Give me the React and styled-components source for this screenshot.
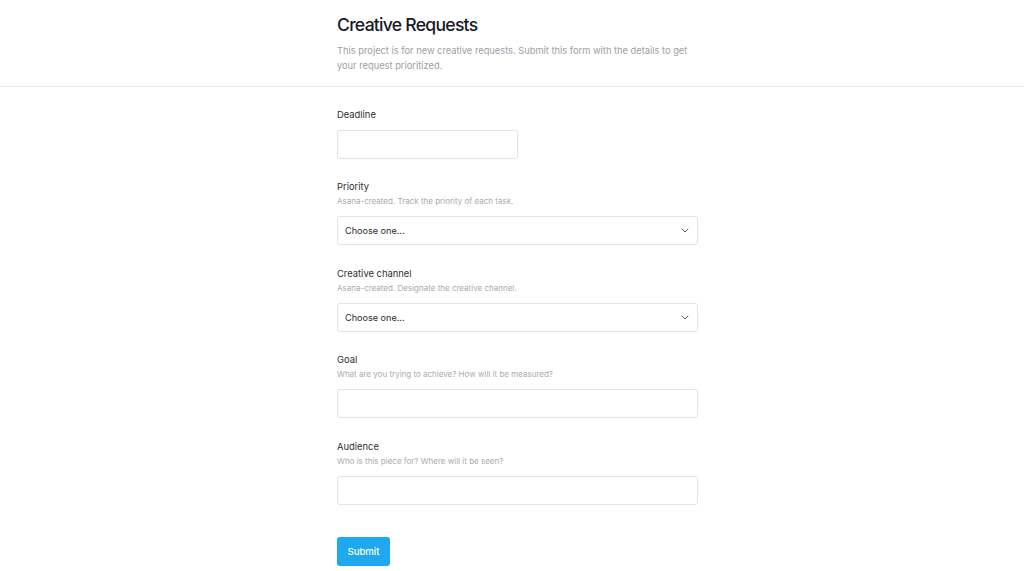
import React from "react";
import styled, { createGlobalStyle } from "styled-components";

const GlobalStyle = createGlobalStyle`
  html, body {
    margin: 0;
    padding: 0;
    background: #ffffff;
    font-family: Inter, "Noto Sans", "Liberation Sans", sans-serif;
    color: #1e1f21;
  }
  * { box-sizing: border-box; }
`;

const Header = styled.header`
  border-bottom: 1px solid #e6e6e6;
  padding: 14px 0 13px;
`;

const Column = styled.div`
  width: 361px;
  margin-left: calc(50% - 175px);
`;

const Title = styled.h1`
  margin: 0;
  font-size: 17.6px;
  line-height: 22px;
  font-weight: 500;
  color: #151b26;
  letter-spacing: -0.75px;
`;

const Desc = styled.p`
  margin: 7px 0 0;
  font-size: 9.3px;
  line-height: 15px;
  color: #9ca0a6;
  width: 361px;
`;

const Form = styled.form`
  padding-top: 21px;
  display: flex;
  flex-direction: column;
`;

const Field = styled.div`
  display: flex;
  flex-direction: column;
  margin-bottom: ${(p) => (p.$first ? "21px" : "21.5px")};
`;

const Label = styled.label`
  font-size: 9.4px;
  line-height: 14px;
  color: #2e2f31;
  margin-bottom: ${(p) => (p.$hasHelp ? "1px" : "8px")};
`;

const Help = styled.div`
  font-size: 8px;
  line-height: 12px;
  color: #a8abb0;
  margin-bottom: 9px;
`;

const Input = styled.div`
  width: ${(p) => (p.$short ? "181px" : "361px")};
  height: 29px;
  border: 1px solid #e2e3e5;
  border-radius: 3px;
  background: #fff;
`;

const Select = styled.div`
  width: 361px;
  height: 29px;
  border: 1px solid #e2e3e5;
  border-radius: 3px;
  background: #fff;
  display: flex;
  align-items: center;
  justify-content: space-between;
  padding: 0 8px 0 7px;
  font-size: 9.1px;
  color: #2a2b2d;
`;

const Chevron = () => (
  <svg width="8" height="5" viewBox="0 0 8 5" fill="none">
    <path d="M1 1l3 3 3-3" stroke="#5a5d62" strokeWidth="1" strokeLinecap="round" strokeLinejoin="round" />
  </svg>
);

const Submit = styled.button`
  margin-top: 11px;
  width: 53px;
  height: 29px;
  border: none;
  border-radius: 3px;
  background: #1ea8f0;
  color: #fff;
  font-family: inherit;
  font-size: 9.6px;
  font-weight: 500;
  padding: 0;
  cursor: pointer;
`;

const fields = [
  { label: "Priority", help: "Asana-created. Track the priority of each task.", select: true },
  { label: "Creative channel", help: "Asana-created. Designate the creative channel.", select: true },
  { label: "Goal", help: "What are you trying to achieve? How will it be measured?" },
  { label: "Audience", help: "Who is this piece for? Where will it be seen?" },
];

export default function App() {
  return (
    <>
      <GlobalStyle />
      <Header>
        <Column>
          <Title>Creative Requests</Title>
          <Desc>
            This project is for new creative requests. Submit this form with the details to get
            your request prioritized.
          </Desc>
        </Column>
      </Header>
      <Column>
        <Form onSubmit={(e) => e.preventDefault()}>
          <Field $first>
            <Label>Deadline</Label>
            <Input $short />
          </Field>
          {fields.map((f) => (
            <Field key={f.label}>
              <Label $hasHelp>{f.label}</Label>
              <Help>{f.help}</Help>
              {f.select ? (
                <Select>
                  <span>Choose one...</span>
                  <Chevron />
                </Select>
              ) : (
                <Input />
              )}
            </Field>
          ))}
          <div>
            <Submit type="submit">Submit</Submit>
          </div>
        </Form>
      </Column>
    </>
  );
}
